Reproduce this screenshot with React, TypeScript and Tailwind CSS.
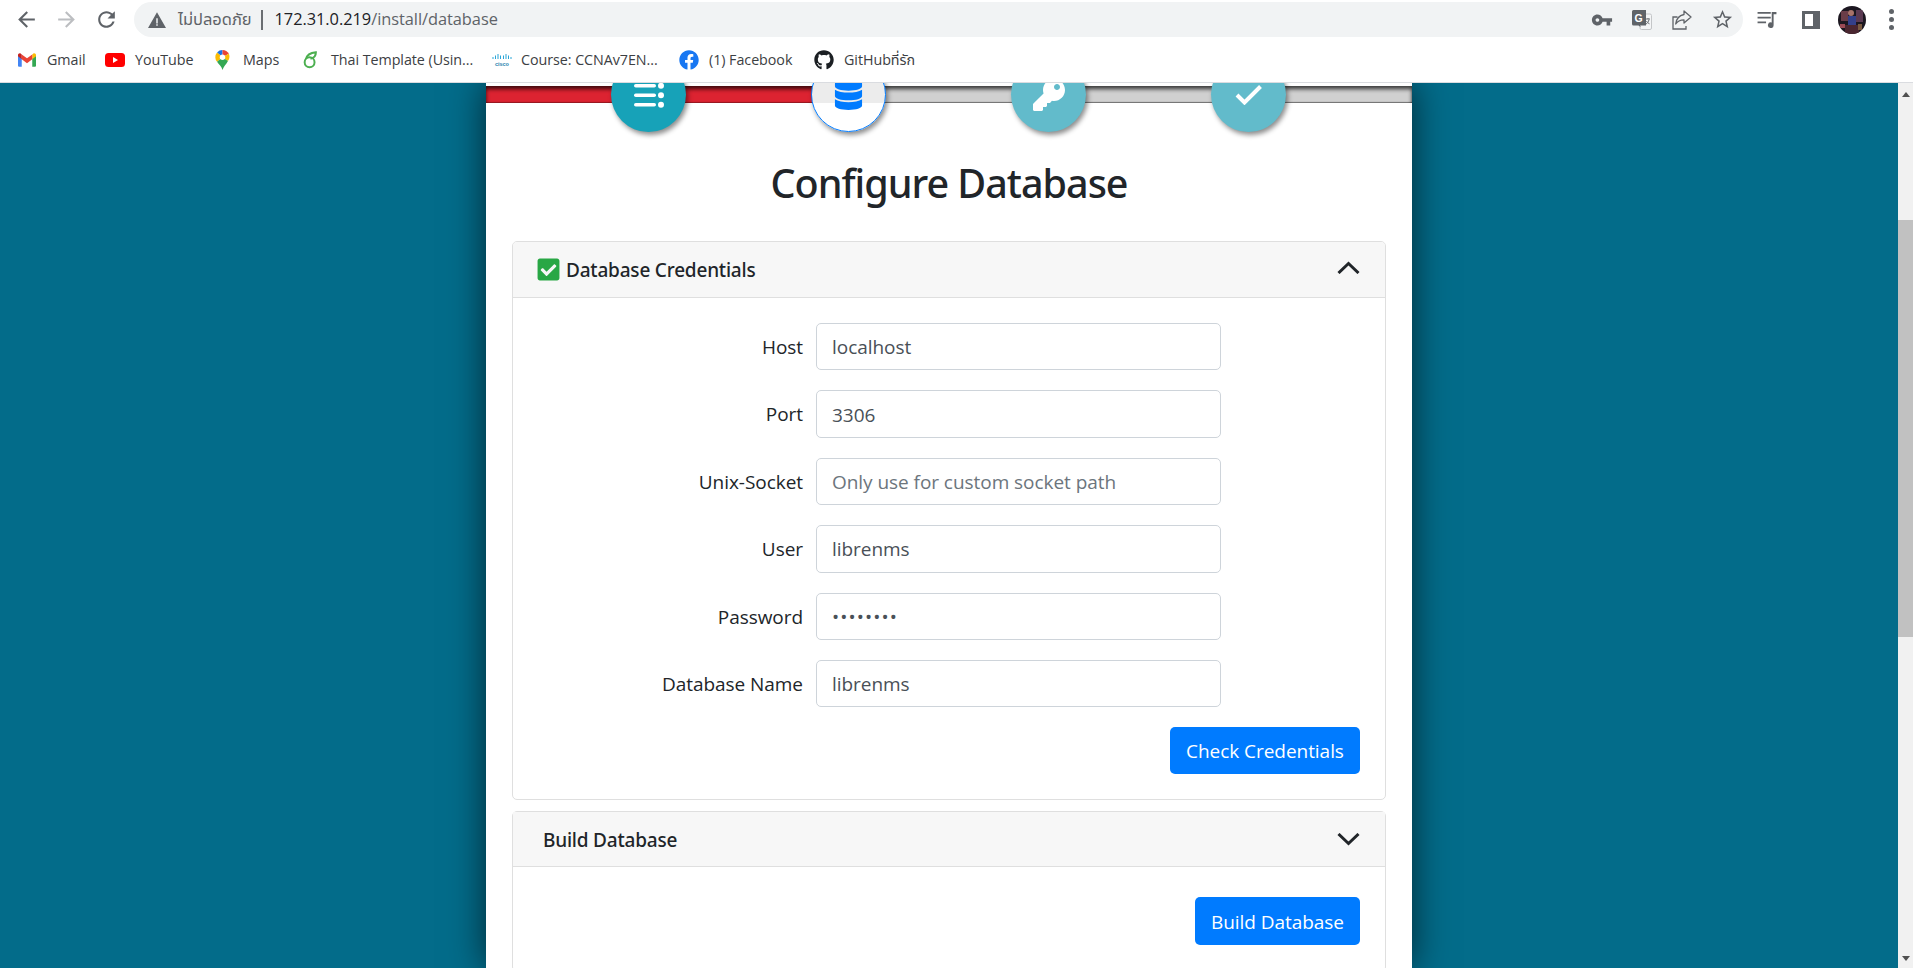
import { FaCheckSquare, FaDatabase, FaFacebook, FaGithub, FaKey } from "react-icons/fa"

const uiFont = "font-['Open_Sans','Noto_Sans_Thai','Noto_Sans',sans-serif]"
const headingFont = "font-['Noto_Sans','Open_Sans',sans-serif] font-medium"

function GmailIcon() {
  return (
    <svg viewBox="0 0 24 18" className="h-[14px] w-[18px]">
      <path d="M0 3v13.5A1.5 1.5 0 0 0 1.5 18H5V7z" fill="#4285f4" />
      <path d="M24 3v13.5a1.5 1.5 0 0 1-1.5 1.5H19V7z" fill="#34a853" />
      <path d="M19 1.5V8l5-4V2.5C24 .6 21.8-.6 20.2.6z" fill="#fbbc04" />
      <path d="M5 8V1.5l7 5.3 7-5.3V8l-7 5.3z" fill="#ea4335" />
      <path d="M0 2.5V4l5 4V1.5L3.800.6C2.200-.6 0 .6 0 2.500z" fill="#c5221f" />
    </svg>
  )
}

function MapsIcon() {
  return (
    <svg viewBox="0 0 16 22" className="h-[20px] w-[15px]">
      <path d="M8 0a8 8 0 0 0-6 2.700L8 8z" fill="#1a73e8" />
      <path d="M8 0a8 8 0 0 1 7 4.200L8 8z" fill="#ea4335" />
      <path d="M15 4.200A8 8 0 0 1 14 12L8 8z" fill="#fbbc04" />
      <path d="M2 2.700A8 8 0 0 0 2 13l6-5z" fill="#fbbc04" />
      <path d="M2 13c2 3 5 5 6 9 1-4 4-6 6-10L8 8z" fill="#34a853" />
      <circle cx="8" cy="8" r="3" fill="#fff" />
    </svg>
  )
}

function LeafIcon() {
  return (
    <svg viewBox="0 0 16 20" className="h-[18px] w-[15px]" fill="none" stroke="#4caf50" strokeWidth="2.200">
      <circle cx="7" cy="12.500" r="5.500" />
      <path d="M3 9C4 4 9 2 14 1.500 14 5 12 8 8 8.500" />
    </svg>
  )
}

function CiscoIcon() {
  return (
    <svg viewBox="0 0 20 14" className="h-[14px] w-[20px]">
      <g fill="#2aa5d8">
        <rect x="0.500" y="4" width="1" height="2" />
        <rect x="3" y="2.500" width="1" height="3.500" />
        <rect x="5.500" y="1" width="1" height="5" />
        <rect x="8" y="2.500" width="1" height="3.500" />
        <rect x="11" y="2.500" width="1" height="3.500" />
        <rect x="13.500" y="1" width="1" height="5" />
        <rect x="16" y="2.500" width="1" height="3.500" />
        <rect x="18.500" y="4" width="1" height="2" />
      </g>
      <text x="10" y="13" textAnchor="middle" fontSize="5.500" fontWeight="700" fill="#1d7fae" fontFamily="Liberation Sans, sans-serif">
        cisco
      </text>
    </svg>
  )
}

const bookmarks = [
  { label: "Gmail", icon: <GmailIcon />, box: "mr-[21px] gap-[11px]", iconBox: "w-[18px]", textBox: "w-[37px]" },
  { label: "YouTube", icon: (
      <svg viewBox="0 0 20 14" className="h-[14px] w-[20px]">
        <rect width="20" height="14" rx="3.500" fill="#f00" />
        <path d="M8 4l5 3-5 3z" fill="#fff" />
      </svg>
    ), box: "mr-[23px] gap-[10px]", iconBox: "w-[20px]", textBox: "w-[57px]" },
  { label: "Maps", icon: <MapsIcon />, box: "mr-[24px] gap-[13px]", iconBox: "w-[15px]", textBox: "w-[36px]" },
  { label: "Thai Template (Usin...", icon: <LeafIcon />, box: "mr-[22px] gap-[13px]", iconBox: "w-[15px]", textBox: "w-[139px]" },
  { label: "Course: CCNAv7EN...", icon: <CiscoIcon />, box: "mr-[21px] gap-[9px]", iconBox: "w-[20px]", textBox: "w-[137px]" },
  { label: "(1) Facebook", icon: <FaFacebook className="text-[20px] text-[#1877f2]" />, box: "mr-[21px] gap-[10px]", iconBox: "w-[20px]", textBox: "w-[84px]" },
  { label: "GitHubที่รัก", icon: <FaGithub className="text-[20px] text-[#1b1f23]" />, box: "gap-[10px]", iconBox: "w-[20px]", textBox: "w-[71px]" },
]

function BrowserChrome() {
  return (
    <header className={`relative z-10 bg-white ${uiFont}`}>
      <div className="flex h-[39px] items-center pl-[6px] pr-[2px]">
        <button className="flex w-[40px] justify-center">
          <svg viewBox="0 0 24 24" className="h-[25px] w-[25px] fill-[#5f6368]">
            <path d="M20 11H7.830l5.590-5.590L12 4l-8 8 8 8 1.410-1.410L7.830 13H20v-2z" />
          </svg>
        </button>
        <button className="flex w-[40px] justify-center">
          <svg viewBox="0 0 24 24" className="h-[25px] w-[25px] fill-[#bcbec1]">
            <path d="M12 4l-1.410 1.410L16.170 11H4v2h12.170l-5.580 5.590L12 20l8-8z" />
          </svg>
        </button>
        <button className="flex w-[40px] justify-center">
          <svg viewBox="0 0 24 24" className="h-[25px] w-[25px] fill-[#5f6368]">
            <path d="M17.650 6.350C16.200 4.900 14.210 4 12 4c-4.420 0-7.990 3.580-7.990 8s3.570 8 7.990 8c3.730 0 6.840-2.550 7.730-6h-2.080c-.82 2.330-3.040 4-5.650 4-3.310 0-6-2.690-6-6s2.690-6 6-6c1.660 0 3.140.69 4.220 1.780L13 11h7V4l-2.350 2.350z" />
          </svg>
        </button>
        {/* omnibox */}
        <div className="ml-[8px] flex h-[35px] flex-1 items-center rounded-full bg-[#f1f3f4] pl-[14px] pr-[1px]">
          <svg viewBox="0 0 24 24" className="h-[18px] w-[18px] fill-[#5f6368]">
            <path fillRule="evenodd" d="M0 22.500h24L12 1.500zM11 9.500h2v7h-2zM11 17.800h2v2h-2z" />
          </svg>
          <span className="ml-[12px] w-[73px] whitespace-nowrap text-[16.500px] text-[#5f6368]">ไม่ปลอดภัย</span>
          <span className="ml-[10px] h-[20px] w-[1.500px] bg-[#6a6e72]" />
          <span className="ml-[12px] text-[16.400px] text-[#202124]">
            172.31.0.219<span className="text-[#5f6368]">/install/database</span>
          </span>
          <div className="ml-auto flex items-center">
            <span className="flex w-[40px] justify-center">
              <svg viewBox="0 0 24 24" className="h-[22px] w-[22px] fill-[#5f6368]">
                <path d="M12.650 10C11.830 7.670 9.610 6 7 6c-3.310 0-6 2.690-6 6s2.690 6 6 6c2.610 0 4.830-1.670 5.650-4H17v4h4v-4h2v-4H12.650zM7 14c-1.100 0-2-.9-2-2s.9-2 2-2 2 .9 2 2-.9 2-2 2z" />
              </svg>
            </span>
            <span className="flex w-[40px] justify-center">
              <svg viewBox="0 0 20 20" className="h-[20px] w-[20px]">
                <rect x="8" y="4" width="11.500" height="15.500" rx="1.500" fill="#f4f5f6" stroke="#c4c6c8" />
                <path d="M14 9h4M16 8v1M17 9.500c-.5 2.500-1.500 3.800-3 4.500M14.500 11c.6 1.300 1.500 2.300 3 2.800" fill="none" stroke="#6a6e72" strokeWidth="1" />
                <path d="M1.500 0H14v15.500H8l.8 1.800L6.500 15.500H1.500A1.500 1.500 0 0 1 0 14V1.500A1.500 1.500 0 0 1 1.500 0z" fill="#5f6368" />
                <text x="6.500" y="11.500" textAnchor="middle" fontSize="10.500" fontWeight="700" fill="#fff" fontFamily="Liberation Sans, sans-serif">
                  G
                </text>
              </svg>
            </span>
            <span className="flex w-[40px] justify-center">
              <svg viewBox="0 0 20 20" className="h-[20px] w-[20px]" fill="none" stroke="#5f6368" strokeWidth="1.300">
                <path d="M5.500 7H1v12h13v-3" />
                <path d="M12 1l7 6-7 6V9.800C8 9.800 5.500 11 3.700 14 4.300 9 7 5.500 12 4.500z" strokeLinejoin="round" />
              </svg>
            </span>
            <span className="flex w-[40px] justify-center">
              <svg viewBox="0 0 24 24" className="h-[23px] w-[23px] fill-[#5f6368]">
                <path d="M22 9.240l-7.190-.62L12 2 9.190 8.630 2 9.240l5.460 4.730L5.820 21 12 17.270 18.180 21l-1.630-7.030L22 9.240zM12 15.400l-3.760 2.270 1-4.280-3.320-2.880 4.380-.38L12 6.100l1.710 4.040 4.380.38-3.320 2.880 1 4.280L12 15.400z" />
              </svg>
            </span>
          </div>
        </div>
        <span className="ml-[4px] flex w-[40px] justify-center">
          <svg viewBox="0 0 20 18" className="h-[17px] w-[20px] fill-[#5f6368]">
            <path d="M0 1h14v2H0zM0 6h14v2H0zM0 11h9v2H0z" />
            <path d="M15 1h5v2.500h-3V15a3 3 0 1 1-2-2.800z" />
          </svg>
        </span>
        <span className="ml-[4px] flex w-[40px] justify-center">
          <span className="flex h-[18px] w-[18px] border-[3px] border-[#5f6368] bg-[#5f6368]">
            <span className="h-full w-[8px] bg-white" />
          </span>
        </span>
        <span className="ml-[1px] flex w-[40px] justify-center">
          <svg viewBox="0 0 28 28" className="h-[28px] w-[28px]">
            <clipPath id="avatar-clip">
              <circle cx="14" cy="14" r="14" />
            </clipPath>
            <g clipPath="url(#avatar-clip)">
              <rect width="28" height="28" fill="#1c1720" />
              <rect x="3" y="5" width="7" height="10" fill="#6a3d48" />
              <rect x="18" y="4" width="7" height="12" fill="#5b3a52" />
              <circle cx="13" cy="7" r="3" fill="#a8736a" />
              <rect x="10" y="10" width="8" height="9" fill="#34408a" />
              <rect x="7" y="19" width="14" height="9" fill="#4a2630" />
              <rect x="2" y="18" width="5" height="4" fill="#9a4a55" />
              <rect x="20" y="18" width="4" height="6" fill="#7a5a40" />
            </g>
          </svg>
        </span>
        <span className="ml-[-1px] flex w-[40px] flex-col items-center gap-[3px]">
          <span className="h-[5px] w-[5px] rounded-full bg-[#5f6368]" />
          <span className="h-[5px] w-[5px] rounded-full bg-[#5f6368]" />
          <span className="h-[5px] w-[5px] rounded-full bg-[#5f6368]" />
        </span>
      </div>
      <nav className="flex h-[44px] items-center border-b border-[#dadce0] pb-[1px] pl-[18px] text-[14.300px] text-[#3c4043]">
        {bookmarks.map((b) => (
          <a key={b.label} className={`flex items-center whitespace-nowrap ${b.box}`}>
            <span className={`flex justify-center ${b.iconBox}`}>{b.icon}</span>
            <span className={b.textBox}>{b.label}</span>
          </a>
        ))}
      </nav>
    </header>
  )
}

function Scrollbar() {
  return (
    <aside className="flex w-[15px] shrink-0 flex-col bg-[#f1f1f1]">
      <div className="mt-[9px] flex justify-center">
        <span className="h-0 w-0 border-x-[4.500px] border-b-[5px] border-x-transparent border-b-[#505050]" />
      </div>
      <div className="mt-[123px] h-[417px] bg-[#c1c1c1]" />
      <div className="mt-auto mb-[7px] flex justify-center">
        <span className="h-0 w-0 border-x-[4.500px] border-t-[5px] border-x-transparent border-t-[#505050]" />
      </div>
    </aside>
  )
}

function StepCircle({ className, children }: { className: string; children: React.ReactNode }) {
  return (
    <div className={`flex h-[75px] w-[75px] items-center justify-center rounded-full text-white shadow-[2px_3px_5px_rgba(0,0,0,0.45)] ${className}`}>
      {children}
    </div>
  )
}

function Stepper() {
  return (
    <div className="relative mt-[3px]">
      <div className="flex h-[17px]">
        <div className="w-[360px] bg-[#dc2331] shadow-[inset_0_3px_4px_rgba(0,0,0,0.75),inset_0_-1px_1px_rgba(0,0,0,0.3)]" />
        <div className="flex-1 bg-[#d0d0d0] shadow-[inset_0_3px_4px_rgba(0,0,0,0.75),inset_0_-1px_1px_rgba(0,0,0,0.45)]" />
      </div>
      <div className="absolute top-[-29px] right-[126px] left-[125px] flex justify-between">
        <StepCircle className="bg-[#17a2b8]">
          <svg viewBox="0 0 32 32" className="h-[32px] w-[32px] fill-white">
            <rect x="1" y="5" width="22" height="3.500" rx="1.750" />
            <circle cx="28" cy="6.750" r="3" />
            <rect x="1" y="14.500" width="22" height="3.500" rx="1.750" />
            <circle cx="28" cy="16.250" r="3" />
            <rect x="1" y="24" width="22" height="3.500" rx="1.750" />
            <circle cx="28" cy="25.750" r="3" />
          </svg>
        </StepCircle>
        <StepCircle className="border border-[#007bff] bg-[linear-gradient(#ececec_45px,#ffffff_45px)]">
          <FaDatabase className="text-[31px] text-[#007bff]" />
        </StepCircle>
        <StepCircle className="bg-[#62bbcb]">
          <FaKey className="text-[32px]" />
        </StepCircle>
        <StepCircle className="bg-[#62bbcb]">
          <svg viewBox="0 0 27 20" className="h-[20px] w-[27px]" fill="none" stroke="#fff" strokeWidth="4">
            <path d="M2 10l7.500 7.500L25.500 1.500" />
          </svg>
        </StepCircle>
      </div>
    </div>
  )
}

function Chevron({ up }: { up?: boolean }) {
  return (
    <svg viewBox="0 0 23 13" className="h-[13px] w-[23px]" fill="none" stroke="#212529" strokeWidth="3">
      <path d={up ? "M1.500 12L11.500 2.500 21.500 12" : "M1.500 1L11.500 10.500 21.500 1"} />
    </svg>
  )
}

const fields = [
  { label: "Host", value: "localhost" },
  { label: "Port", value: "3306" },
  { label: "Unix-Socket", placeholder: "Only use for custom socket path" },
  { label: "User", value: "librenms" },
  { label: "Password", value: "password", type: "password" },
  { label: "Database Name", value: "librenms" },
]

function CredentialsCard() {
  return (
    <section className="overflow-hidden rounded-[5px] border border-[#dfdfdf]">
      <div className="flex h-[56px] items-center justify-between border-b border-[#dfdfdf] bg-[#f7f7f7] pl-[23px] pr-[25px]">
        <div className="flex items-center gap-[5px]">
          <FaCheckSquare className="text-[25px] text-[#28a745]" />
          <span className={`pt-[2px] tracking-[-0.2px] ${headingFont}`}>Database Credentials</span>
        </div>
        <span className="mb-[4px]">
          <Chevron up />
        </span>
      </div>
      <div className="pt-[25px] pr-[25px] pb-[25px]">
        <div className="grid grid-cols-[290px_405px] items-center gap-x-[13px] gap-y-[20px]">
          {fields.map((f) => (
            <label key={f.label} className="contents">
              <span className="pt-[1px] text-right">{f.label}</span>
              <input
                readOnly
                type={f.type ?? "text"}
                value={f.value}
                placeholder={f.placeholder}
                className={`h-[47.400px] w-full rounded-[5px] border border-[#ced4da] bg-white px-[15px] pt-[1px] text-[#495057] outline-none placeholder:text-[#6c757d] ${
                  f.type === "password" ? "tracking-[1.100px]" : ""
                }`}
              />
            </label>
          ))}
        </div>
        <div className="mt-[20px] flex justify-end">
          <button className="h-[47px] w-[190px] rounded-[5px] bg-[#007bff] pt-[1px] text-white">Check Credentials</button>
        </div>
      </div>
    </section>
  )
}

function BuildCard() {
  return (
    <section className="mt-[11px] rounded-[5px] border border-[#dfdfdf]">
      <div className="flex h-[55px] items-center justify-between border-b border-[#dfdfdf] bg-[#f7f7f7] pl-[30px] pr-[25px]">
        <div className={`pt-[1px] tracking-[-0.2px] ${headingFont}`}>Build Database</div>
        <Chevron />
      </div>
      <div className="flex justify-end pt-[30px] pr-[25px] pb-[26px]">
        <button className="h-[48px] w-[165px] rounded-[5px] bg-[#007bff] pt-[1px] text-white">Build Database</button>
      </div>
    </section>
  )
}

export default function App() {
  return (
    <div className={`flex h-[968px] w-[1913px] flex-col overflow-hidden text-[19px] tracking-[-0.05px] text-[#212529] ${uiFont}`}>
      <BrowserChrome />
      <main className="flex min-h-0 flex-1">
        <div className="flex flex-1 justify-center bg-[#036c8a]">
          <div className="w-[926px] shrink-0 bg-white shadow-[0_0_35px_rgba(0,0,0,0.65)]">
            <Stepper />
            <h2 className={`mt-[56px] mb-[34px] text-center text-[39.500px] leading-[48px] tracking-[-1px] ${headingFont}`}>Configure Database</h2>
            <div className="mx-[26px]">
              <CredentialsCard />
              <BuildCard />
            </div>
          </div>
        </div>
        <Scrollbar />
      </main>
    </div>
  )
}
